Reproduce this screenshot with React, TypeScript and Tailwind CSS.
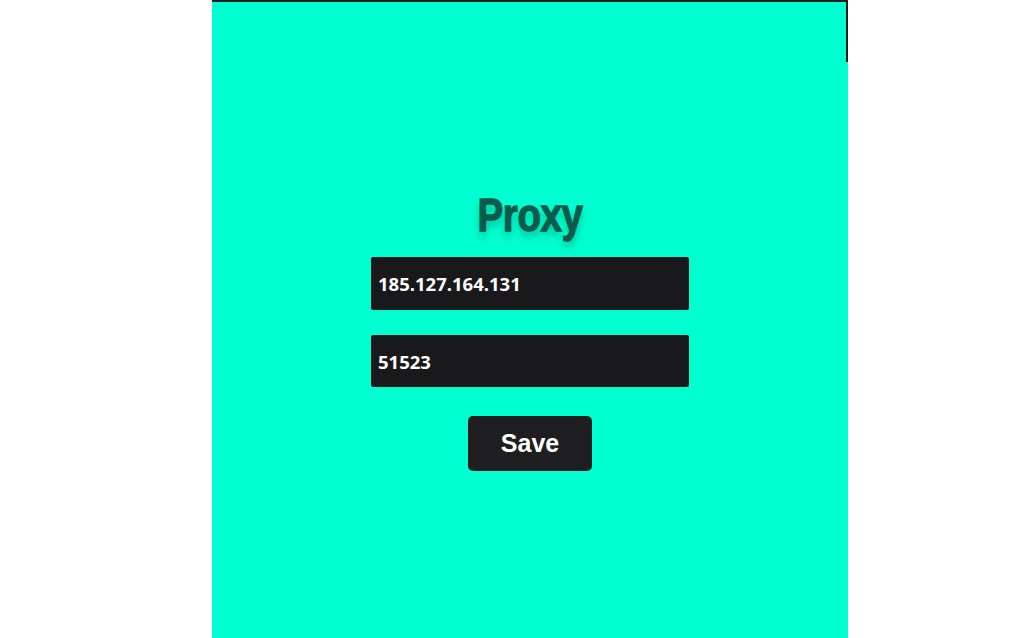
import React, { useState } from 'react';

const App: React.FC = () => {
  const [host, setHost] = useState('185.127.164.131');
  const [port, setPort] = useState('51523');

  return (
    <div className="min-h-screen w-full bg-white flex pl-[212px]">
      <div className="w-[636px] h-[638px] bg-[#00ffd0] border-t-2 border-[#1d1d1d] relative flex flex-col items-center pt-[185px]">
        {/* dark edge at top right */}
        <div className="absolute right-0 top-0 w-[2px] h-[60px] bg-[#1d1d1d]" />
        <h1 className="h-[57px] flex items-center font-['Liberation_Sans',Arial,sans-serif] text-[47px] font-bold text-[#0b5b4d] scale-x-[0.82] tracking-[-0.5px] [-webkit-text-stroke:1.3px_#0b5b4d] [text-shadow:0_6px_8px_rgba(0,80,60,0.35)]">
          Proxy
        </h1>
        <input
          value={host}
          onChange={(e) => setHost(e.target.value)}
          className="mt-[13px] w-[318px] h-[53px] bg-[#19181a] rounded-[2px] px-[7px] font-['Open_Sans','Noto_Sans',sans-serif] text-white text-[18.5px] font-bold outline-none"
        />
        <input
          value={port}
          onChange={(e) => setPort(e.target.value)}
          className="mt-[25px] w-[318px] h-[52px] bg-[#19181a] rounded-[2px] px-[7px] font-['Open_Sans','Noto_Sans',sans-serif] text-white text-[18.5px] font-bold outline-none"
        />
        <button className="mt-[29px] w-[124px] h-[55px] bg-[#1e1d1f] rounded-[5px] font-['Liberation_Sans',Arial,sans-serif] text-white text-[25px] font-bold">
          Save
        </button>
      </div>
    </div>
  );
};

export default App;
